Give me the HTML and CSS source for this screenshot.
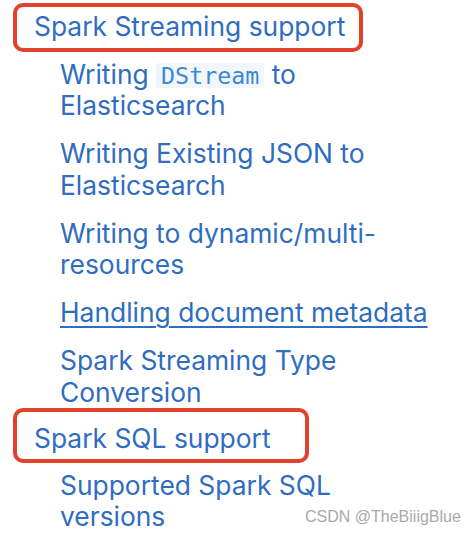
FILE: index.html
```html
<!DOCTYPE html>
<html>
<head>
<meta charset="utf-8">
<link rel="stylesheet" href="styles.css">
</head>
<body>
<div class="toc">
  <div class="heading heading-first"><a class="link">Spark Streaming support</a></div>
  <ul class="items items-first">
    <li><a class="link">Writing <code class="code">DStream</code> to Elasticsearch</a></li>
    <li><a class="link">Writing Existing JSON to Elasticsearch</a></li>
    <li><a class="link">Writing to dynamic/multi-resources</a></li>
    <li><a class="link underline">Handling document metadata</a></li>
    <li><a class="link">Spark Streaming Type Conversion</a></li>
  </ul>
  <div class="heading heading-second"><a class="link">Spark SQL support</a></div>
  <ul class="items items-second">
    <li><a class="link">Supported Spark SQL versions</a></li>
  </ul>
</div>
<div class="watermark">CSDN @TheBiiigBlue</div>
</body>
</html>
```
FILE: styles.css
```css
html, body {
  margin: 0;
  padding: 0;
  background: #ffffff;
}
body {
  width: 474px;
  height: 536px;
  overflow: hidden;
  position: relative;
  font-family: Inter, "Noto Sans", sans-serif;
  font-size: 26.4px;
}
.toc {
  display: flex;
  flex-direction: column;
  padding-top: 3px;
}
.link {
  color: #2f6dc1;
  text-decoration: none;
}
.underline {
  text-decoration: underline;
  text-decoration-thickness: 2px;
  text-underline-offset: 4px;
}
.heading {
  align-self: flex-start;
  margin-left: 13px;
  border: 4px solid #e2412c;
  border-radius: 10px;
  padding-left: 17px;
  line-height: 32px;
}
.heading-first {
  padding-top: 3px;
  padding-bottom: 6px;
  padding-right: 14px;
}
.heading-second {
  margin-top: 0;
  padding-top: 10px;
  padding-bottom: 5px;
  padding-right: 34px;
}
.items {
  list-style: none;
  margin: 0;
  padding: 0 0 0 60px;
  width: 376px;
  display: flex;
  flex-direction: column;
  gap: 16.5px;
  line-height: 31.5px;
}
.items-first {
  margin-top: 6.5px;
}
.items-second {
  margin-top: 6.5px;
}
.code {
  display: inline-block;
  font-family: "DejaVu Sans Mono", monospace;
  font-size: 23.3px;
  line-height: 25px;
  color: #3a8ad6;
  background: #f3f6f9;
  padding: 0 5px;
  border-radius: 3px;
}
.watermark {
  position: absolute;
  left: 305px;
  top: 508px;
  font-family: "Liberation Sans", Arial, sans-serif;
  font-size: 16px;
  color: #a9a9a9;
}
```
